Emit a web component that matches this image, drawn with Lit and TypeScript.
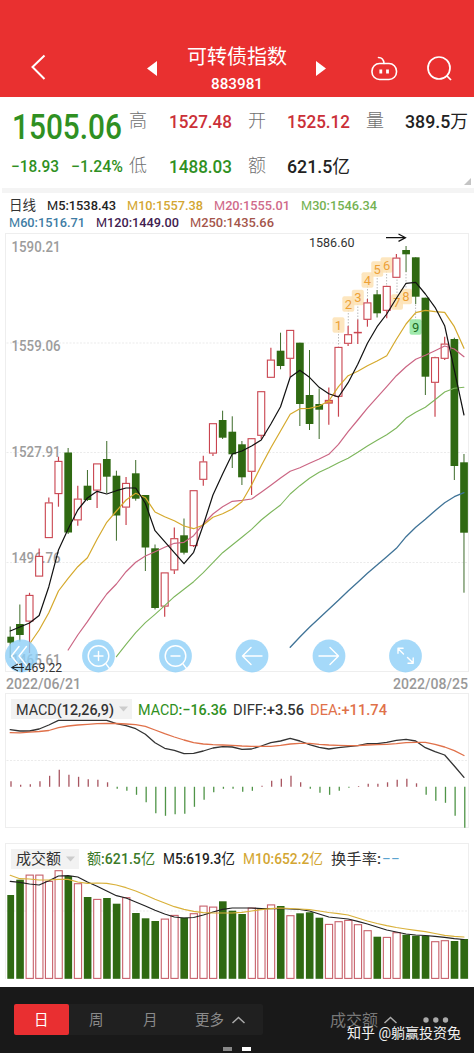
import { LitElement, html, svg, css } from "lit";
import { customElement } from "lit/decorators.js";

const X0 = 10.2;
const STEP = 9.655;
const xAt = (i: number) => +(X0 + STEP * i).toFixed(2);

const RED = "#c9444f";
const GREEN = "#2f6912";

// kind, high, body top, body bottom, low
type Candle = [string, number, number, number, number];
const candles: Candle[] = [
  ["g", 626.5, 636.7, 642.7, 658], ["g", 604.5, 624, 635, 641.5], ["r", 592.8, 595, 621.5, 653],
  ["r", 548.5, 556, 576.5, 576.5], ["r", 497.5, 502.5, 538, 538], ["r", 456.7, 461, 494, 506.7],
  ["g", 448, 452.5, 532.5, 534], ["r", 485.7, 498.7, 520.3, 525.7], ["g", 470, 485.7, 500, 501],
  ["r", 463.5, 463.5, 490.5, 508], ["g", 441, 459, 476.7, 493], ["g", 470.7, 475.7, 515.5, 540.7],
  ["r", 477, 483, 507.5, 525], ["g", 460, 473.3, 498.7, 500.7], ["g", 495, 495, 547.5, 571],
  ["g", 544.5, 548.3, 608, 609.5], ["r", 572.5, 572.5, 606.5, 616.7], ["r", 527.5, 538.3, 570.3, 574],
  ["g", 518.5, 535.3, 552.7, 554.5], ["r", 490.3, 490.3, 546, 547], ["r", 455.7, 461.5, 479.7, 485.7],
  ["r", 423.3, 423.3, 453.5, 456], ["g", 410.7, 420, 437.7, 439], ["g", 416.3, 431.7, 454.3, 468],
  ["g", 441, 444.3, 477.3, 485], ["r", 438, 438.3, 471.7, 495], ["r", 391, 391.3, 435.7, 439],
  ["r", 347.7, 359.7, 377.7, 378], ["g", 332.7, 350.7, 366, 369.3], ["r", 330, 330, 358.7, 377],
  ["g", 342.7, 342.7, 404, 426], ["g", 350, 395, 424, 430], ["g", 388.5, 404, 409.7, 439],
  ["o", 387.5, 400, 403.5, 424.7], ["r", 346.7, 347, 396.7, 416.7], ["r", 326, 334.3, 343.7, 346],
  ["r", 319.5, 332, 333, 344], ["r", 299, 302.5, 319.7, 326.7], ["g", 290, 294.3, 313.3, 317.5],
  ["r", 285.7, 286, 310.7, 318.3], ["r", 254, 257.7, 277.7, 278], ["g", 246, 250, 254.3, 272],
  ["g", 257.3, 257.3, 296.7, 304], ["g", 297.7, 297.7, 376.7, 395], ["r", 356.7, 357.3, 382.7, 416.7],
  ["r", 336.7, 343.7, 358.7, 360], ["g", 337.7, 339, 466, 480], ["g", 454, 462.3, 532.7, 592.7],
];

const ma5 = [631, 627, 623, 615.5, 586.7, 550, 529, 510, 498, 491.3, 494, 490.7, 488, 488, 503.3, 530.7, 541.7, 552.7, 563.7, 552.3, 525, 495, 474, 454, 451, 446, 440, 424, 406.7, 377.3, 370.3, 377.3, 387.3, 393.7, 397, 382.7, 364.3, 343.3, 326.7, 314, 298.3, 283.3, 282.3, 294, 307.3, 325.7, 370, 415];
const ma10 = [644, 630, 612.7, 591, 578.3, 566.7, 557.7, 539.3, 522.3, 511, 500, 493.3, 497.7, 512, 516.7, 520.7, 526, 528.7, 525, 517.3, 513.7, 509, 501.7, 485, 465.7, 447.7, 431, 414.3, 408.7, 408.3, 406, 401, 386.7, 375.7, 371.3, 365.7, 361, 355.7, 339.3, 324, 312.7, 310.3, 311.7, 312.3, 326.7, 348.3];
const ma20 = [650, 635, 621.7, 607.3, 594, 584, 571.7, 562.3, 556, 551.7, 547.3, 543.3, 542.3, 535.7, 524, 514, 506.7, 501.3, 500.3, 499, 492.3, 485.3, 478, 471.3, 467.7, 463.3, 459, 454.3, 444.3, 431.7, 420, 408.2, 397.3, 386.7, 375.7, 366.7, 359.3, 355.3, 350.7, 346, 349, 356.7];
const ma30 = [656.7, 644.3, 632.7, 622.7, 614.3, 605.7, 596.7, 589.3, 581.7, 572.7, 562.7, 552.7, 545, 537.3, 529.3, 520, 512.3, 505, 494, 485.7, 478.3, 472.3, 467.7, 462.7, 458.3, 452.3, 446, 440.3, 434.7, 428, 418.3, 412.3, 407.3, 399.8, 392, 388.3, 387.3];
const ma60 = [647.3, 637, 627.3, 618.3, 609.3, 600.2, 591, 582.2, 573.3, 565, 556.7, 548.3, 536.7, 527.3, 519.3, 510.7, 502.7, 496.7, 492.7];

const diff = [729.7, 731, 731, 729, 725, 720.3, 720.3, 720.3, 720.3, 720.3, 720.3, 723.7, 725.7, 728.7, 734.3, 742.7, 748.3, 750.3, 753.7, 753.3, 751, 748, 746.7, 747, 749.3, 749, 746, 742.7, 741, 738.3, 741, 744.7, 747.3, 749, 747.7, 746.7, 745.7, 743.7, 743.7, 742.3, 740.3, 739.3, 741, 747.7, 751.7, 755, 766, 777.3];
const dea = [732.7, 732.8, 732.2, 731.5, 730.5, 727.7, 726, 725, 724.3, 723.7, 723.3, 723.5, 724, 724.7, 726.3, 730, 733.7, 737, 740, 742.7, 744, 744.7, 745, 745.3, 746, 746.3, 746.3, 746.3, 745.3, 744, 743.3, 743.3, 744.3, 745, 745.3, 745.7, 745.7, 745, 744.7, 744.3, 743.7, 742.7, 742.3, 742.3, 744.3, 747, 750.7, 755.5];
const hist = [5.5, 2, 2.5, 5.5, 11, 17, 12, 10, 7.5, 7, 4.5, -2, -4, -8, -15.5, -26.5, -29, -27.5, -27, -20, -13, -5.5, -2, -2, -5, -4, 1, 6, 8, 11, 4.5, -2, -6, -8, -4, -1, 0.7, 3, 3, 4.5, 7, 8, 3.5, -8, -14, -16, -29, -41];

const vol = [895, 879.7, 874.7, 874.7, 881, 870.3, 876, 883.3, 897, 899, 898, 903.7, 897.3, 913, 918.3, 921, 918.7, 915, 917.7, 913.3, 905.7, 906.7, 901.3, 910.7, 914, 907.7, 908.5, 904.5, 906, 915.3, 913.3, 912.3, 917.7, 924, 921.3, 920, 924.3, 930.3, 936.7, 937, 932.3, 934.7, 935.7, 935.7, 941.3, 940.3, 941, 939];
const risingBars = new Set([2, 3, 4, 5, 7, 9, 12, 16, 17, 19, 20, 21, 25, 26, 27, 29, 33, 34, 35, 36, 37, 39, 40, 44, 45]);
const vma5 = [881.3, 882.3, 884, 885, 880.7, 876, 875.7, 877, 882, 886.3, 891, 895.7, 898, 902, 906, 910.3, 914, 917, 918, 917.5, 915, 912, 909.3, 908, 908, 908, 908.7, 908.7, 908.5, 909, 909.5, 911, 914, 917, 918, 919, 921.3, 924, 927, 930, 932, 934, 935, 935.5, 936.3, 937.3, 938.7, 939.5];
const vma10 = [875.3, 878.7, 879, 880, 880, 879.3, 879.3, 882, 883.3, 883, 883.3, 885, 887.7, 891, 895, 899.3, 903, 906.7, 909.3, 911.3, 912.7, 913, 913, 913, 912.3, 911, 909.7, 908.7, 908, 908.5, 909, 909.7, 911, 912.5, 913.7, 915, 918, 921, 923.5, 925.7, 927.5, 929, 930.3, 931.7, 933.5, 935.3, 936.3, 937];

const line = (ys: number[], start: number, color: string, w = 1.1) => svg`<polyline
  points=${ys.map((y, k) => `${xAt(k + start)},${y}`).join(" ")} fill="none" stroke=${color}
  stroke-width=${w} stroke-linejoin="round" stroke-linecap="round"></polyline>`;

const grid = (y: number) => svg`<line x1="6.5" x2="468.5" y1=${y} y2=${y} stroke="#ebebeb" stroke-dasharray="2 1.5"></line>`;

// Han characters and capitals are set lighter than the figures beside them.
const pieces = (s: string, light: number) =>
  s.split(/([\u4e00-\u9fffA-Z]+)/).filter(Boolean).map((p) =>
    /[\u4e00-\u9fffA-Z]/.test(p) ? svg`<tspan font-weight=${light}>${p}</tspan>` : svg`${p}`);

// A single line of text condensed or widened to an exact width.
const label = (s: string, w: number, size: number, color: string, h = 18, weight = 500, light = 400) => html`<svg
  width=${w} height=${h}><text x="0" y=${h / 2 + size * 0.36} font-size=${size} fill=${color}
  font-weight=${weight} textLength=${w} lengthAdjust="spacingAndGlyphs">${pieces(s, light)}</text></svg>`;

const chartText = (s: string, x: number, cy: number, w: number, size: number, color: string, weight = 400) => svg`<text
  x=${x} y=${cy + size * 0.36} font-size=${size} fill=${color} font-weight=${weight} textLength=${w}
  lengthAdjust="spacingAndGlyphs">${s}</text>`;

const axis: [string, number][] = [
  ["1590.21", 246.5], ["1559.06", 345.5], ["1527.91", 451.7], ["1496.76", 558], ["1465.61", 660],
];

// Count label, centre x, centre y, end of its leader line
type Tag = [string, number, number, number];
const tags: Tag[] = [
  ["1", 338.5, 325, 346], ["2", 348.3, 304, 326], ["3", 357.8, 297.5, 320], ["4", 367.5, 280, 299],
  ["5", 377.2, 269, 290], ["6", 386.6, 265, 286], ["7", 397, 302, 278], ["8", 406, 296.5, 272], ["9", 415.6, 327, 304],
];

@customElement("app-root")
export class AppRoot extends LitElement {
  static styles = css`
    :host {
      display: flex;
      flex-direction: column;
      width: 474px;
      height: 1053px;
      overflow: hidden;
      position: relative;
      background: #fff;
      font-family: Roboto, "Noto Sans CJK SC", sans-serif;
    }
    svg { display: block; flex: none; overflow: visible; }
    .top {
      box-sizing: border-box;
      height: 97px;
      padding: 42px 22px 0 31px;
      background: #e93030;
      display: flex;
      align-items: flex-start;
    }
    .back { margin-top: 12px; }
    .prev { margin: 19px 30px 0 102px; }
    .title { display: flex; flex-direction: column; align-items: center; width: 99px; }
    .next { margin: 19px 45px 0 30px; }
    .robot { margin: 14px 29px 0 0; }
    .search { margin-top: 14px; }
    .quote {
      display: grid;
      grid-template-columns: 129px 40px 79px 39px 79px 39px 1fr;
      grid-template-rows: 47px 44px;
      align-items: center;
      height: 91px;
      position: relative;
    }
    .price { padding: 12px 0 0 12px; }
    .change { display: flex; gap: 12px; padding: 0 0 0 11px; }
    .corner { position: absolute; right: 3px; bottom: 3px; }
    .band { height: 5px; background: #f4f4f4; margin-left: 2px; }
    .legend { height: 40px; box-sizing: border-box; padding: 4px 0 0 9px; }
    .row { display: flex; height: 17px; align-items: center; gap: 11px; }
    .dates { height: 21px; box-sizing: border-box; padding: 2px 6px 0; display: flex; justify-content: space-between; align-items: center; }
    .panel { box-sizing: border-box; margin: 0 5px; border: 1px solid #eee; }
    .macd { height: 135px; }
    .volume { height: 136px; margin-top: 15px; border-bottom: 0; }
    .head { display: flex; align-items: center; gap: 8px; height: 30px; padding-left: 5px; margin-bottom: -6px; position: relative; }
    .macd .head { gap: 6px; }
    .pick { display: flex; align-items: center; background: #f2f2f2; height: 20px; padding: 0 4px 0 5px; gap: 5px; }
    .turnover { display: flex; gap: 1px; }
    .plot { margin-left: -6px; }
    .bottom {
      margin-top: auto;
      height: 66px;
      background: #191919;
      display: flex;
      box-sizing: border-box;
      padding: 17px 0 0 14px;
      position: relative;
    }
    .tabs { display: flex; align-items: center; width: 249px; height: 31px; background: #202020; border-radius: 2px; }
    .tab { width: 54px; display: flex; justify-content: center; align-items: center; height: 31px; }
    .on { background: #e92f31; border-radius: 2px; width: 55px; }
    .more { display: flex; align-items: center; gap: 8px; margin-left: 18px; }
    .pickvol { display: flex; align-items: center; gap: 6px; margin-left: 67px; height: 31px; }
    .dots { margin: 12px 0 0 26px; }
    .mark { position: absolute; left: 347px; top: 1023px; }
    .pages { position: absolute; left: 223px; bottom: 2px; display: flex; gap: 10px; }
    .page { width: 9px; height: 4px; background: #888; }
    .now { background: #fff; }
  `;

  private candle([kind, high, top, bottom, low]: Candle, i: number) {
    const x = xAt(i);
    if (kind === "g") {
      const left = i === 0 ? 7.3 : x - 3.8;
      return svg`<line x1=${x} x2=${x} y1=${high} y2=${low} stroke="#3d6b2a"></line>
        <rect x=${left} y=${top} width=${x + 3.9 - left} height=${bottom - top} fill=${GREEN}></rect>`;
    }
    return svg`<line x1=${x} x2=${x} y1=${high} y2=${top} stroke=${RED} stroke-width="1.2"></line>
      <line x1=${x} x2=${x} y1=${bottom} y2=${low} stroke=${RED} stroke-width="1.2"></line>
      <rect x=${x - 3.5} y=${top + 0.4} width="7" height=${Math.max(bottom - top - 0.8, 0.4)}
        fill=${kind === "o" ? "#f5a050" : "#fff"} stroke=${RED} stroke-width="1.1"></rect>`;
  }

  private tag([n, x, y, to]: Tag) {
    const green = n === "9";
    return svg`<line x1=${x} x2=${x} y1=${y} y2=${to} stroke="#aaa" stroke-width="0.8" stroke-dasharray="1.5 1.5"></line>
      <rect x=${x - 6} y=${y - 7.8} width="12" height="15.6" rx="2" fill=${green ? "#92e6a0" : "#fde2b6"} fill-opacity="0.88"></rect>
      <text x=${x} y=${y + 4.6} text-anchor="middle" font-size="13" fill=${green ? "#1c6b22" : "#eda137"}>${n}</text>`;
  }

  private mainChart() {
    const disc = (cx: number, inner: unknown) => svg`<g transform="translate(${cx} 656)">
      <circle r="16.4" fill="#8fcff8" fill-opacity="0.8"></circle>
      <g fill="none" stroke="#fff" stroke-width="1.4" stroke-linecap="round" stroke-linejoin="round">${inner}</g></g>`;
    const lens = svg`<circle cx="0" cy="0" r="10.3"></circle><path d="M7.5 7.8 11 12.5M-4.5 0H4.5"></path>`;
    return html`<svg width="474" height="439" viewBox="0 233 474 439">
      <rect x="5.5" y="233.5" width="463" height="438" fill="none" stroke="#eee"></rect>
      ${[343, 452.5, 562.5].map(grid)}
      ${axis.map(([s, y]) => chartText(s, 11.5, y, 49, 15, "#9c9c9c", 500))}
      ${tags.map((t) => this.tag(t))}
      ${candles.map((c, i) => this.candle(c, i))}
      ${line(ma60, 29, "#3f7397", 1.3)} ${line(ma30, 11, "#7db65c")} ${line(ma20, 6, "#cb6684", 1.2)}
      ${line(ma10, 2, "#d5a92c", 1.2)} ${line(ma5, 0, "#111", 1.2)}
      ${chartText("1586.60", 309, 242, 45.5, 13.5, "#333")}
      <path d="M386 237.7H405M398.5 234l7 3.7-7 3.7" fill="none" stroke="#111" stroke-width="1.2"></path>
      ${disc(21.5, svg`<path d="M-2.5 -9.5-10 0l7.5 9.5M5-9.5-2.5 0 5 9.5"></path>`)}
      ${chartText("1469.22", 18, 667.3, 44, 13, "#333")}
      <path d="M12 667.5H24M18 664l-6.5 3.5 6.5 3.5" fill="none" stroke="#222"></path>
      ${disc(98.5, svg`${lens}<path d="M0-4.5V4.5"></path>`)}
      ${disc(175.5, lens)}
      ${disc(252, svg`<path d="M10 0H-9.5M-1-8.5-9.5 0-1 8.5"></path>`)}
      ${disc(329, svg`<path d="M-10 0H9.5M1-8.5 9.5 0 1 8.5"></path>`)}
      ${disc(405.5, svg`<path d="M-2-2-7.5-7.5M-7.5-2.8V-7.7H-2.4M2 1.5 7.7 7M7.7 2V7.2H2.5"></path>`)}
    </svg>`;
  }

  private macdPlot() {
    return html`<svg class="plot" width="474" height="109" viewBox="0 718 474 109">
      ${grid(760.5)}
      ${hist.map((h, i) => svg`<line x1=${xAt(i) + 0.8} x2=${xAt(i) + 0.8} y1="786.8" y2=${786.8 - h} stroke=${h > 0 ? "#a85560" : "#4f9447"} stroke-width="1.3"></line>`)}
      ${line(diff, 0, "#333", 1.3)} ${line(dea, 0, "#e0714a", 1.3)}
    </svg>`;
  }

  private volumePlot() {
    return html`<svg class="plot" width="474" height="110" viewBox="0 868 474 110">
      ${grid(911)}
      ${vol.map((y, i) => {
        const x = xAt(i);
        return risingBars.has(i)
          ? svg`<rect x=${x - 3.4} y=${y + 0.4} width="7.2" height=${978 - y} fill="#fff" stroke="#c7606a" stroke-width="1.1"></rect>`
          : svg`<rect x=${i === 0 ? 7.3 : x - 3.6} y=${y} width=${i === 0 ? 6.8 : 7.6} height=${978.8 - y} fill=${GREEN}></rect>`;
      })}
      ${line(vma5, 0, "#222", 1.2)} ${line(vma10, 0, "#d9b13a", 1.2)}
    </svg>`;
  }

  render() {
    const red = "#cb3038", green = "#2f9022", grey = "#707070", ink = "#222";
    const name = (s: string) => label(s, 18, 18, grey, 24, 400, 300);
    const value = (s: string, color: string) => label(s, 63, 18.4, color, 24);
    const chevron = html`<svg width="13" height="8"><path d="M.5 7 6.5 1.5 12.5 7" fill="none" stroke="#aaa" stroke-width="1.5"></path></svg>`;
    const caret = html`<svg width="9" height="6"><path d="M0 .5H9L4.5 5.5Z" fill="#ccc"></path></svg>`;
    return html`
      <div class="top">
        <svg class="back" width="14" height="26"><path d="M13.5 1.5 1.5 13 13.5 25" fill="none" stroke="#fff" stroke-width="2"></path></svg>
        <svg class="prev" width="10" height="15"><path d="M10 0V15L0 7.5Z" fill="#fff"></path></svg>
        <div class="title">
          ${label("可转债指数", 100, 20, "#fff", 30, 400)}
          ${label("883981", 52, 15.5, "#fff", 22)}
        </div>
        <svg class="next" width="10" height="15"><path d="M0 0V15L10 7.5Z" fill="#fff"></path></svg>
        <svg class="robot" width="27" height="25" fill="none" stroke="#fff" stroke-width="1.6">
          <rect x="1" y="7.5" width="24.5" height="16" rx="7.5"></rect>
          <path d="M7.5 1.5Q12.5 1.5 13 7.5" stroke-linecap="round"></path>
          <path d="M9.8 13.5v4M16.5 13.5v4" stroke-width="2.8"></path>
        </svg>
        <svg class="search" width="25" height="25" fill="none" stroke="#fff" stroke-width="1.7">
          <circle cx="12" cy="12" r="11"></circle><path d="M19.5 19.5 24 24"></path>
        </svg>
      </div>

      <div class="quote">
        <div class="price">${label("1505.06", 110, 34.5, green, 33)}</div>
        ${name("高")} ${value("1527.48", red)}
        ${name("开")} ${value("1525.12", red)}
        ${name("量")} ${value("389.5万", ink)}
        <div class="change">${label("−18.93", 48, 16, green)}${label("−1.24%", 52, 16, green)}</div>
        ${name("低")} ${value("1488.03", green)}
        ${name("额")} ${value("621.5亿", ink)}
        <svg class="corner" width="7" height="7"><path d="M7 0V7H0Z" fill="#c4c4c4"></path></svg>
      </div>
      <div class="band"></div>

      <div class="legend">
        <div class="row">
          ${label("日线", 27, 13.5, "#333", 17, 400)} ${label("M5:1538.43", 69, 13.6, "#222", 17)}
          ${label("M10:1557.38", 76, 13.6, "#d3a632", 17)} ${label("M20:1555.01", 76, 13.6, "#cf6a8a", 17)}
          ${label("M30:1546.34", 76, 13.6, "#74b252", 17)}
        </div>
        <div class="row">
          ${label("M60:1516.71", 76, 13.6, "#3e7ca4", 17)} ${label("M120:1449.00", 83, 13.6, "#41204f", 17)}
          ${label("M250:1435.66", 84, 13.6, "#a4554a", 17)}
        </div>
      </div>

      ${this.mainChart()}
      <div class="dates">${label("2022/06/21", 75, 15, "#999", 18)}${label("2022/08/25", 75, 15, "#999", 18)}</div>

      <div class="panel macd">
        <div class="head">
          <div class="pick">${label("MACD(12,26,9)", 98, 15.5, "#333")}${caret}</div>
          ${label("MACD:−16.36", 89, 15.5, green)}
          ${label("DIFF:+3.56", 71, 15.5, "#333")}
          ${label("DEA:+11.74", 77, 15.5, "#e0714a")}
        </div>
        ${this.macdPlot()}
      </div>

      <div class="panel volume">
        <div class="head">
          <div class="pick">${label("成交额", 45, 15, "#333", 18, 400)}${caret}</div>
          ${label("额:621.5亿", 68, 15.2, "#3c7a28")}
          ${label("M5:619.3亿", 72, 15.2, ink)}
          ${label("M10:652.2亿", 80, 15.2, "#d3a632")}
          <div class="turnover">${label("换手率:", 50, 15.2, "#333")}${label("−−", 18, 15, "#5ba3d0", 18, 400)}</div>
        </div>
        ${this.volumePlot()}
      </div>

      <div class="bottom">
        <div class="tabs">
          <div class="tab on">${label("日", 14.5, 14.5, "#fff", 18, 400)}</div>
          <div class="tab">${label("周", 14.5, 14.5, "#8a8a8a", 18, 400)}</div>
          <div class="tab">${label("月", 14.5, 14.5, "#8a8a8a", 18, 400)}</div>
          <div class="more">${label("更多", 29, 14.5, "#8a8a8a", 18, 400)}${chevron}</div>
        </div>
        <div class="pickvol">${label("成交额", 48, 16, "#777", 18, 400)}${chevron}</div>
        <svg class="dots" width="26" height="8" fill="#aaa"><circle cx="3" cy="4" r="2.7"></circle><circle cx="12.8" cy="4" r="2.7"></circle><circle cx="22.5" cy="4" r="2.7"></circle></svg>
        <div class="pages"><div class="page"></div><div class="page now"></div></div>
      </div>
      <div class="mark">${label("知乎 @躺赢投资兔", 114, 14, "#f2f2f2", 19, 400)}</div>
    `;
  }
}
